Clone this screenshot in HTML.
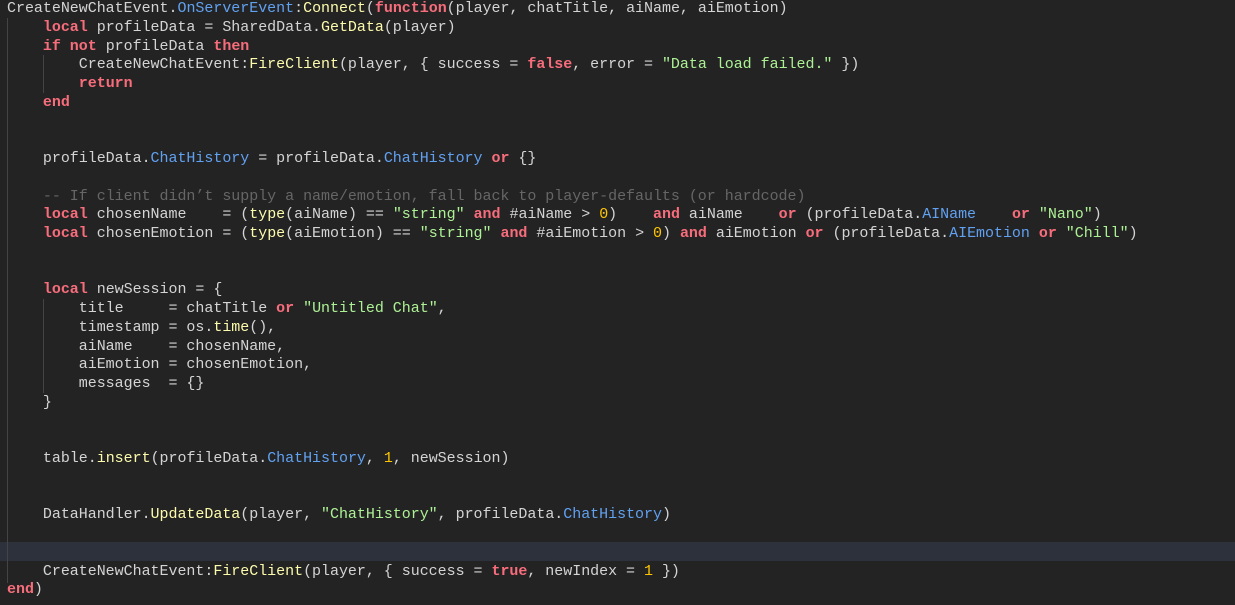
<!DOCTYPE html>
<html><head><meta charset="utf-8"><style>
html,body{margin:0;padding:0;background:#232323;width:1235px;height:605px;overflow:hidden}
pre{position:absolute;left:7px;top:0px;margin:0;font-family:"Liberation Mono",monospace;font-size:15px;line-height:18.75px;letter-spacing:-0.03px;color:#d4d4d4;white-space:pre;z-index:2}
.k{color:#f86d7c;font-weight:bold}.m{color:#fdfbac}.p{color:#61a1f1}.s{color:#adf195}.n{color:#ffc600}.c{color:#666}
.hl{position:absolute;left:0;width:1235px;top:542px;height:19px;background:#2c313c;z-index:1}
.g{position:absolute;width:1px;background:#444;z-index:1}
</style></head><body>
<div class="hl"></div>
<div class="g" style="left:7px;top:18px;height:565px"></div>
<div class="g" style="left:43px;top:55px;height:38px"></div>
<div class="g" style="left:43px;top:299px;height:94px"></div>
<pre>CreateNewChatEvent.<span class="p">OnServerEvent</span>:<span class="m">Connect</span>(<span class="k">function</span>(player, chatTitle, aiName, aiEmotion)
    <span class="k">local</span> profileData = SharedData.<span class="m">GetData</span>(player)
    <span class="k">if not</span> profileData <span class="k">then</span>
        CreateNewChatEvent:<span class="m">FireClient</span>(player, { success = <span class="k">false</span>, error = <span class="s">"Data load failed."</span> })
        <span class="k">return</span>
    <span class="k">end</span>


    profileData.<span class="p">ChatHistory</span> = profileData.<span class="p">ChatHistory</span> <span class="k">or</span> {}

    <span class="c">-- If client didn’t supply a name/emotion, fall back to player-defaults (or hardcode)</span>
    <span class="k">local</span> chosenName    = (<span class="m">type</span>(aiName) == <span class="s">"string"</span> <span class="k">and</span> #aiName &gt; <span class="n">0</span>)    <span class="k">and</span> aiName    <span class="k">or</span> (profileData.<span class="p">AIName</span>    <span class="k">or</span> <span class="s">"Nano"</span>)
    <span class="k">local</span> chosenEmotion = (<span class="m">type</span>(aiEmotion) == <span class="s">"string"</span> <span class="k">and</span> #aiEmotion &gt; <span class="n">0</span>) <span class="k">and</span> aiEmotion <span class="k">or</span> (profileData.<span class="p">AIEmotion</span> <span class="k">or</span> <span class="s">"Chill"</span>)


    <span class="k">local</span> newSession = {
        title     = chatTitle <span class="k">or</span> <span class="s">"Untitled Chat"</span>,
        timestamp = os.<span class="m">time</span>(),
        aiName    = chosenName,
        aiEmotion = chosenEmotion,
        messages  = {}
    }


    table.<span class="m">insert</span>(profileData.<span class="p">ChatHistory</span>, <span class="n">1</span>, newSession)


    DataHandler.<span class="m">UpdateData</span>(player, <span class="s">"ChatHistory"</span>, profileData.<span class="p">ChatHistory</span>)


    CreateNewChatEvent:<span class="m">FireClient</span>(player, { success = <span class="k">true</span>, newIndex = <span class="n">1</span> })
<span class="k">end</span>)</pre>
</body></html>
